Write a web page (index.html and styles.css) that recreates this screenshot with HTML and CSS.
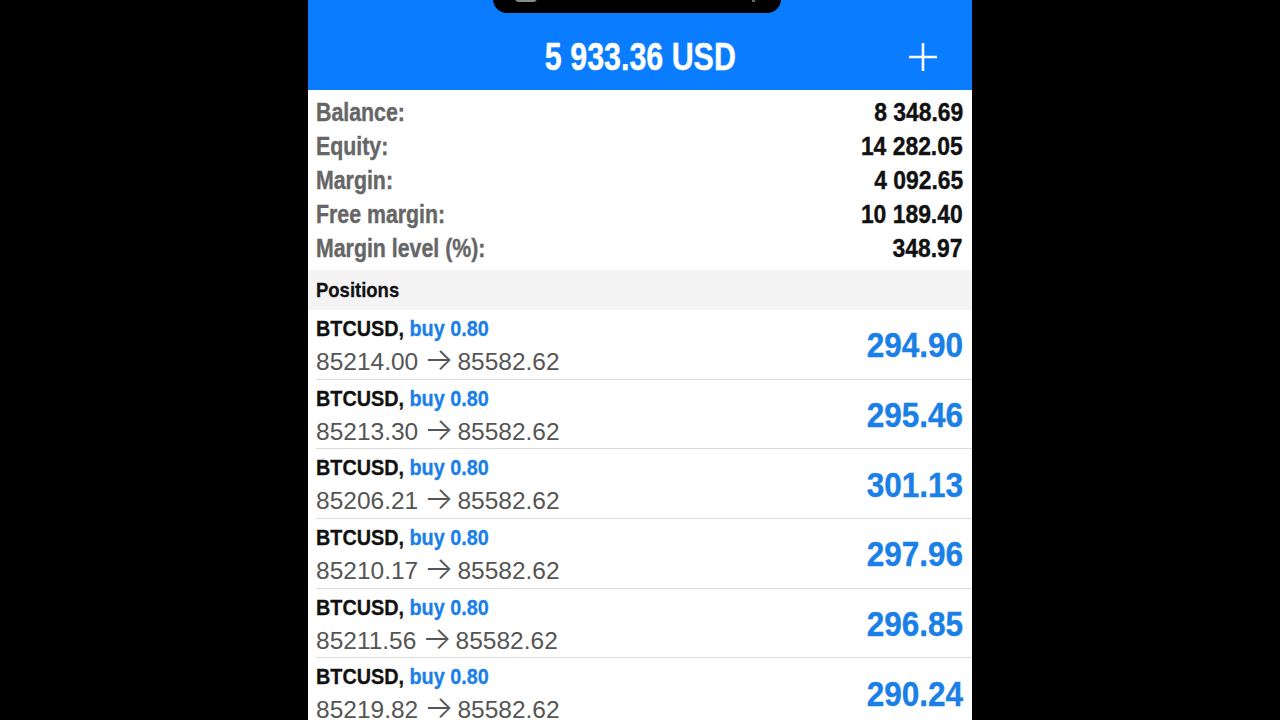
FILE: index.html
```html
<!DOCTYPE html>
<html>
<head>
<meta charset="utf-8">
<link rel="stylesheet" href="styles.css">
</head>
<body>
<div class="screen">
  <div class="island"><span class="cam"></span><span class="dot"></span></div>
  <header class="topbar">
    <div class="title">5 933.36 USD</div>
    <svg class="plus" width="30" height="30" viewBox="0 0 30 30"><path d="M15 1V29M1 15H29" stroke="#fff" stroke-width="2.6" fill="none"/></svg>
  </header>
  <section class="summary">
    <div class="srow"><span class="lbl">Balance:</span><span class="val">8 348.69</span></div>
    <div class="srow"><span class="lbl">Equity:</span><span class="val">14 282.05</span></div>
    <div class="srow"><span class="lbl">Margin:</span><span class="val">4 092.65</span></div>
    <div class="srow"><span class="lbl">Free margin:</span><span class="val">10 189.40</span></div>
    <div class="srow"><span class="lbl">Margin level (%):</span><span class="val">348.97</span></div>
  </section>
  <div class="section-head"><span class="sh">Positions</span></div>
  <div class="positions">
    <div class="pos"><div class="info"><div class="l1"><span class="c1">BTCUSD, <span class="buy">buy 0.80</span></span></div><div class="l2">85214.00 <span class="arr">→</span> 85582.62</div></div><div class="profit">294.90</div></div>
    <div class="pos"><div class="info"><div class="l1"><span class="c1">BTCUSD, <span class="buy">buy 0.80</span></span></div><div class="l2">85213.30 <span class="arr">→</span> 85582.62</div></div><div class="profit">295.46</div></div>
    <div class="pos"><div class="info"><div class="l1"><span class="c1">BTCUSD, <span class="buy">buy 0.80</span></span></div><div class="l2">85206.21 <span class="arr">→</span> 85582.62</div></div><div class="profit">301.13</div></div>
    <div class="pos"><div class="info"><div class="l1"><span class="c1">BTCUSD, <span class="buy">buy 0.80</span></span></div><div class="l2">85210.17 <span class="arr">→</span> 85582.62</div></div><div class="profit">297.96</div></div>
    <div class="pos"><div class="info"><div class="l1"><span class="c1">BTCUSD, <span class="buy">buy 0.80</span></span></div><div class="l2">85211.56 <span class="arr">→</span> 85582.62</div></div><div class="profit">296.85</div></div>
    <div class="pos"><div class="info"><div class="l1"><span class="c1">BTCUSD, <span class="buy">buy 0.80</span></span></div><div class="l2">85219.82 <span class="arr">→</span> 85582.62</div></div><div class="profit">290.24</div></div>
  </div>
</div>
</body>
</html>
```
FILE: styles.css
```css
html, body {
  margin: 0;
  padding: 0;
  background: #000;
  height: 720px;
  overflow: hidden;
}
.screen {
  position: relative;
  width: 664px;
  height: 720px;
  margin-left: 308px;
  background: #fff;
  overflow: hidden;
  font-family: "Liberation Sans", Arial, sans-serif;
}
.island {
  position: absolute;
  z-index: 5;
  left: 185px;
  top: -20px;
  width: 288px;
  height: 33px;
  background: #000;
  border-radius: 14px;
}
.island .cam {
  position: absolute;
  left: 22px;
  top: 18px;
  width: 22px;
  height: 4px;
  border-radius: 0 0 4px 4px;
  background: #8a8a8a;
}
.island .dot {
  position: absolute;
  right: 26px;
  top: 20px;
  width: 3px;
  height: 2px;
  background: #666;
}
.topbar {
  height: 90px;
  background: #0a7cff;
  display: flex;
  align-items: center;
  justify-content: center;
  position: relative;
}
.title {
  display: inline-block;
  color: #fff;
  font-weight: bold;
  font-size: 38px;
  margin-top: 25px;
  -webkit-text-stroke: 0.4px #fff;
  transform: scaleX(0.8);
  transform-origin: center;
}
.plus {
  position: absolute;
  right: 34px;
  top: 42px;
}
.summary {
  padding: 5px 9px 5px 8px;
}
.srow {
  display: flex;
  justify-content: space-between;
  align-items: center;
  height: 34px;
  font-weight: bold;
  font-size: 26px;
}
.lbl {
  display: inline-block;
  color: #666;
  -webkit-text-stroke: 0.4px #666;
  transform: scaleX(0.82);
  transform-origin: left center;
}
.val {
  display: inline-block;
  color: #111;
  -webkit-text-stroke: 0.4px #111;
  transform: scaleX(0.88);
  transform-origin: right center;
}
.section-head {
  height: 40px;
  background: #f4f4f4;
  display: flex;
  align-items: center;
  padding-left: 8px;
}
.sh {
  display: inline-block;
  font-weight: bold;
  font-size: 21px;
  color: #111;
  -webkit-text-stroke: 0.3px #111;
  transform: scaleX(0.88);
  transform-origin: left center;
}
.pos {
  box-sizing: border-box;
  height: 69.7px;
  margin-left: 8px;
  padding-right: 9px;
  border-bottom: 1px solid #dcdcdc;
  display: flex;
  justify-content: space-between;
  align-items: center;
}
.info {
  display: flex;
  flex-direction: column;
  margin-top: 3px;
}
.l1 {
  line-height: 30px;
}
.c1 {
  display: inline-block;
  font-weight: bold;
  font-size: 22px;
  color: #111;
  -webkit-text-stroke: 0.3px currentColor;
  transform: scaleX(0.9);
  transform-origin: left center;
}
.buy { color: #1a7fe6; }
.l2 {
  font-size: 24.5px;
  line-height: 32px;
  color: #555;
  white-space: nowrap;
}
.arr {
  font-family: Inter, "DejaVu Sans", sans-serif;
  font-weight: 300;
  font-size: 31px;
  line-height: 20px;
  margin: 0 -3px 0 -1px;
}
.profit {
  display: inline-block;
  font-weight: bold;
  font-size: 35px;
  color: #1a7fe6;
  margin-top: 2px;
  -webkit-text-stroke: 0.4px #1a7fe6;
  transform: scaleX(0.9);
  transform-origin: right center;
}
```
